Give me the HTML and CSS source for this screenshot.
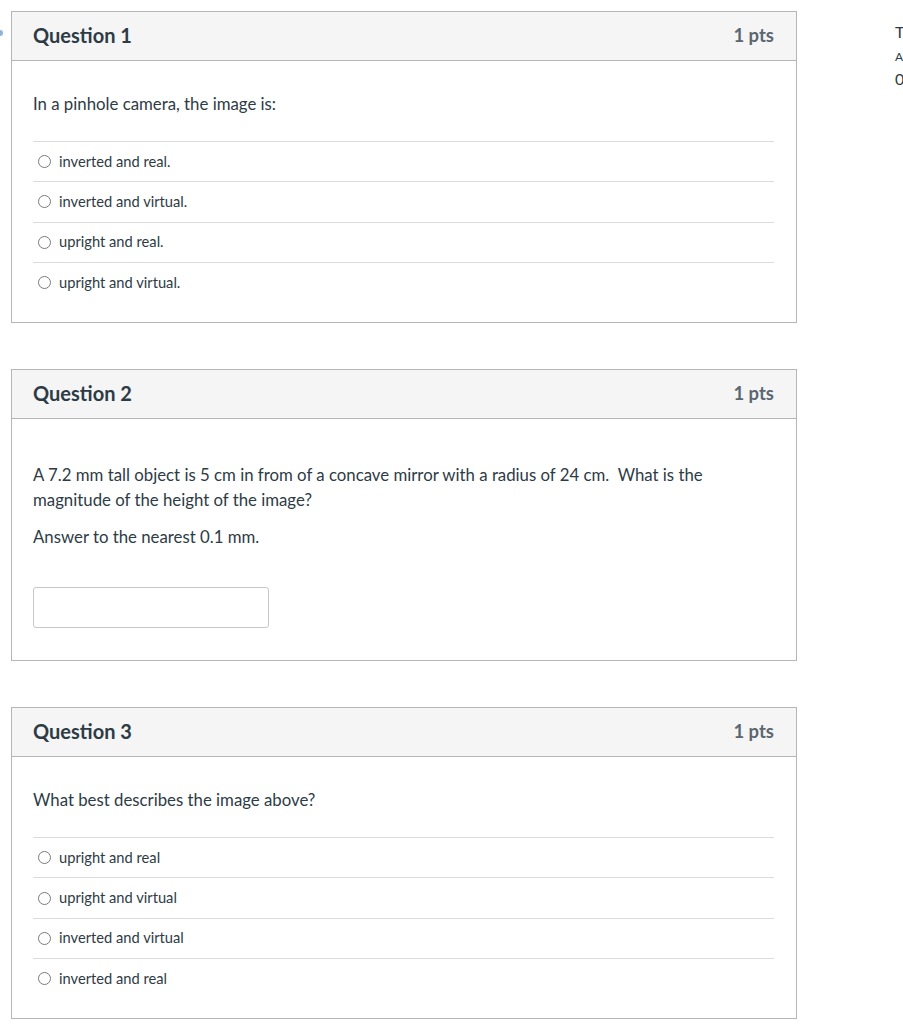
FILE: index.html
```html
<!DOCTYPE html>
<html>
<head>
<meta charset="utf-8">
<link rel="stylesheet" href="styles.css">
</head>
<body>
<div class="page">
  <span class="flag-dot"></span>
  <main class="questions">
    <section class="card">
      <header class="card-head"><h2 class="q-title">Question 1</h2><span class="pts">1 pts</span></header>
      <div class="card-body">
        <p class="q-text">In a pinhole camera, the image is:</p>
        <ul class="answers">
          <li class="answer"><span class="radio"></span>inverted and real.</li>
          <li class="answer"><span class="radio"></span>inverted and virtual.</li>
          <li class="answer"><span class="radio"></span>upright and real.</li>
          <li class="answer"><span class="radio"></span>upright and virtual.</li>
        </ul>
      </div>
    </section>

    <section class="card">
      <header class="card-head"><h2 class="q-title">Question 2</h2><span class="pts">1 pts</span></header>
      <div class="card-body body-2">
        <p class="q-text">A 7.2 mm tall object is 5 cm in from of a concave mirror with a radius of 24 cm.&nbsp; What is the magnitude of the height of the image?</p>
        <p class="q-text q-sub">Answer to the nearest 0.1 mm.</p>
        <input class="answer-input" type="text">
      </div>
    </section>

    <section class="card">
      <header class="card-head"><h2 class="q-title">Question 3</h2><span class="pts">1 pts</span></header>
      <div class="card-body">
        <p class="q-text">What best describes the image above?</p>
        <ul class="answers">
          <li class="answer"><span class="radio"></span>upright and real</li>
          <li class="answer"><span class="radio"></span>upright and virtual</li>
          <li class="answer"><span class="radio"></span>inverted and virtual</li>
          <li class="answer"><span class="radio"></span>inverted and real</li>
        </ul>
      </div>
    </section>
  </main>
  <aside class="side">
    <div class="side-t">T</div>
    <div class="side-a">A</div>
    <div class="side-0">0</div>
  </aside>
</div>
</body>
</html>
```

FILE: styles.css
```css
html, body {
  margin: 0;
  padding: 0;
  background: #ffffff;
}
body {
  font-family: Lato, "Open Sans", "Liberation Sans", sans-serif;
  color: #2d3b45;
  overflow: hidden;
}
.page {
  display: flex;
  align-items: flex-start;
  padding: 11px 0 0 11px;
  position: relative;
}
.flag-dot {
  position: absolute;
  left: -3px;
  top: 30px;
  width: 6px;
  height: 6px;
  border-radius: 50%;
  background: #8fb4d6;
}
.questions {
  width: 786px;
  flex: none;
  display: flex;
  flex-direction: column;
  gap: 46px;
}
.card {
  border: 1px solid #b6b6b6;
  background: #fff;
}
.card-head {
  box-sizing: content-box;
  height: 45px;
  background: #f5f5f5;
  border-bottom: 1px solid #b6b6b6;
  display: flex;
  align-items: center;
  justify-content: space-between;
  padding: 0 22px 3px 21px;
}
.q-title {
  margin: 0;
  font-size: 20px;
  font-weight: 700;
  color: #2d3b45;
}
.pts {
  font-size: 18.5px;
  font-weight: 700;
  color: #5b6770;
}
.card-body {
  padding: 30px 22px 20px 21px;
}
.q-text {
  margin: 0;
  font-size: 16.8px;
  line-height: 25px;
}
.answers {
  list-style: none;
  margin: 25px 0 0;
  padding: 0;
}
.answer {
  display: flex;
  align-items: center;
  box-sizing: content-box;
  height: 37.3px;
  padding-bottom: 2px;
  border-top: 1px solid #dcdcdc;
  font-size: 14.7px;
  color: #2d3b45;
}
.radio {
  width: 11px;
  height: 11px;
  border: 1px solid #7a7a7a;
  border-radius: 50%;
  margin: 2px 8px 0 5px;
  flex: none;
}
.body-2 {
  padding-top: 43px;
  padding-bottom: 32px;
}
.q-sub {
  margin-top: 12px;
}
.answer-input {
  display: block;
  box-sizing: border-box;
  width: 236px;
  height: 41px;
  margin-top: 38px;
  border: 1px solid #c7c7c7;
  border-radius: 3px;
  background: #fff;
  padding: 0 8px;
  font: inherit;
}
.side {
  margin-left: 98px;
  padding-top: 11px;
  color: #2d3b45;
  white-space: nowrap;
}
.side-t {
  font-size: 16px;
  line-height: 20px;
}
.side-a {
  font-size: 12px;
  line-height: 20px;
  margin-top: 5px;
}
.side-0 {
  font-size: 16px;
  line-height: 20px;
  margin-top: 2px;
}
```
